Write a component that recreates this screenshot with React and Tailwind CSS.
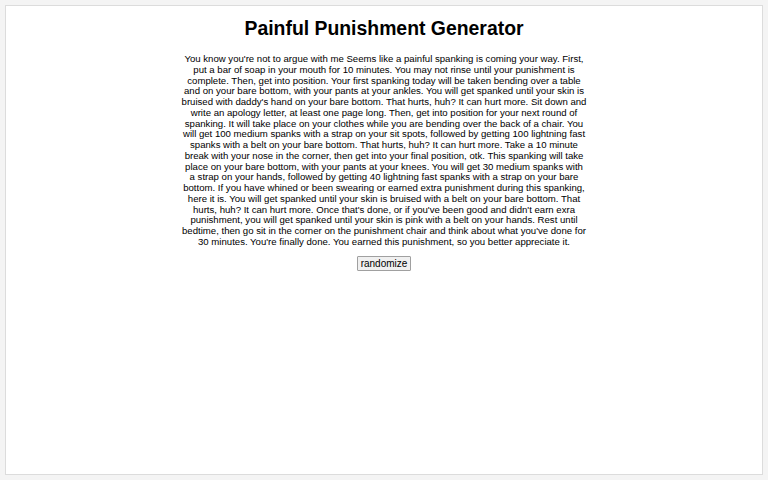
const lines = [
  "You know you're not to argue with me Seems like a painful spanking is coming your way. First,",
  "put a bar of soap in your mouth for 10 minutes. You may not rinse until your punishment is",
  "complete. Then, get into position. Your first spanking today will be taken bending over a table",
  "and on your bare bottom, with your pants at your ankles. You will get spanked until your skin is",
  "bruised with daddy's hand on your bare bottom. That hurts, huh? It can hurt more. Sit down and",
  "write an apology letter, at least one page long. Then, get into position for your next round of",
  "spanking. It will take place on your clothes while you are bending over the back of a chair. You",
  "will get 100 medium spanks with a strap on your sit spots, followed by getting 100 lightning fast",
  "spanks with a belt on your bare bottom. That hurts, huh? It can hurt more. Take a 10 minute",
  "break with your nose in the corner, then get into your final position, otk. This spanking will take",
  "place on your bare bottom, with your pants at your knees. You will get 30 medium spanks with",
  "a strap on your hands, followed by getting 40 lightning fast spanks with a strap on your bare",
  "bottom. If you have whined or been swearing or earned extra punishment during this spanking,",
  "here it is. You will get spanked until your skin is bruised with a belt on your bare bottom. That",
  "hurts, huh? It can hurt more. Once that's done, or if you've been good and didn't earn exra",
  "punishment, you will get spanked until your skin is pink with a belt on your hands. Rest until",
  "bedtime, then go sit in the corner on the punishment chair and think about what you've done for",
  "30 minutes. You're finally done. You earned this punishment, so you better appreciate it.",
];

export default function App() {
  return (
    <div className="w-[768px] h-[480px] bg-[#f4f4f4] p-[5px] font-['Liberation_Sans',Arial,sans-serif] text-black">
      <div className="w-full h-full bg-white border border-[#dcdcdc] flex flex-col items-center">
        <h1 className="mt-[8px] text-[19.4px] leading-[28px] font-bold">Painful Punishment Generator</h1>
        <p className="mt-[12px] text-center text-[9.6px] leading-[10.76px]">
          {lines.map((l, i) => (
            <span key={i} className="block whitespace-nowrap">
              {l}
            </span>
          ))}
        </p>
        <button className="mt-[8px] px-[3px] h-[15px] text-[10px] leading-[13px] bg-[#f0f0f0] border border-[#a0a0a0] rounded-[1px]">
          randomize
        </button>
      </div>
    </div>
  );
}
